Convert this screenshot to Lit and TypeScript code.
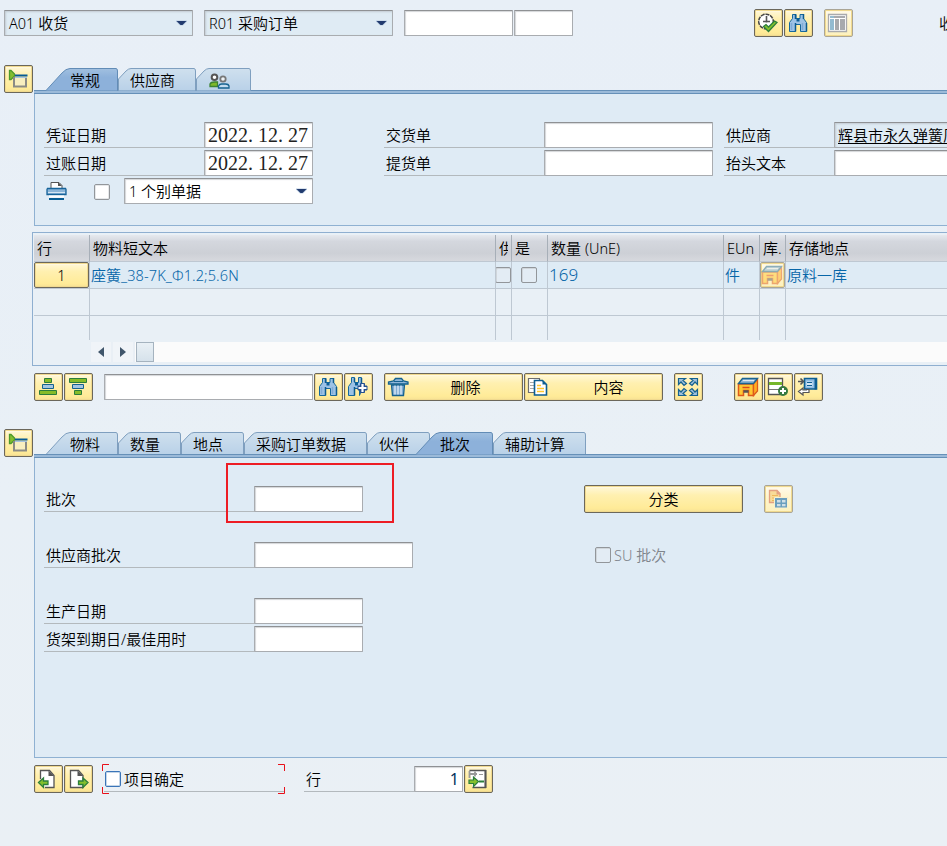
import { LitElement, html, svg, css, nothing, TemplateResult, SVGTemplateResult } from "lit";
import { customElement, property } from "lit/decorators.js";

const binoculars = svg`<path d="M8.500 5.500h3.500v4h4v-4h3.500v4l3 4v9h-6v-7h-5v7h-6v-9l3-4z" fill="#9cc2e5" stroke="#15689d"/><path d="M12.500 9.500h3v3h-3z" fill="#0b5f94"/><path d="M11.500 14v8.500M22.500 14v8.500M11.500 5v5M19.500 5v5" stroke="#0b5a8e" stroke-width="1.500"/><path d="M7.500 14v7M18.500 14v7" stroke="#7fabd6" stroke-width="1.500"/>`;
const box = svg`<path d="M4.500 11h15v11.500h-5v-5h-5v5h-5z" fill="#ffc832" stroke="#dd5a1c" stroke-width="1.500"/><path d="M19.500 10.500l4-4v11.500l-4 4.500z" fill="#ffae22" stroke="#dd5a1c" stroke-width="1.300"/><path d="M4.500 10.500l4-5h15l-4 5z" fill="#8fb6d6" stroke="#1b6390" stroke-width="1.300"/><path d="M9 7.500h11" stroke="#dce9f3"/><path d="M8.500 14.500h7" stroke="#dd4a1c" stroke-width="1.500"/><path d="M9.500 18.500h5" stroke="#555" stroke-width="2.500"/>`;
const arrowLeft = svg`<path d="M4.500 17.500l5-4.500v3h4.500v3.500h-4.500v3z" fill="#84c02c" stroke="#2c7f3c" stroke-width="1.300"/>`;
const arrowRight = svg`<path d="M24 17.500l-5-4.500v3h-4.500v3.500h4.500v3z" fill="#84c02c" stroke="#2c7f3c" stroke-width="1.300"/>`;

const ICONS: Record<string, SVGTemplateResult> = {
  toggle: svg`<path d="M5.500 5.500h1.500l3.500 3.500v2l-3.500 3.500h-1.500z" fill="#84bd2f" stroke="#4c9a2b" stroke-width="1.300"/><path d="M10 12v9.500h12v-9.500" fill="#f8eebf" stroke="#8b8b85" stroke-width="2"/><path d="M11 10.500h12.500" stroke="#075b94" stroke-width="2"/><path d="M11 12.500h12" stroke="#a7c4df"/>`,
  clock: svg`<circle cx="12" cy="12.500" r="7.300" fill="#fff" stroke="#444" stroke-width="1.500" stroke-dasharray="4 .8"/><path d="M12.500 7v6.500M9 12.500h7" stroke="#555" stroke-width="1.600"/><path d="M9.500 17.500l2.500-2 2.500 2.500 6-6 2.500 1.500-8.500 9z" fill="#84c02c" stroke="#2c7f3c" stroke-width="1.300"/>`,
  find: binoculars,
  findNext: svg`<path d="M7.500 4.500h3v5h4v-5h3v5l1 5-3 8v-7h-5v7h-6v-9l3-4z" fill="#9cc2e5" stroke="#15689d"/><path d="M11 9.500h3v3h-3z" fill="#0b5f94"/><path d="M10.500 14v8.500M10.500 5v4M17.500 5v5" stroke="#0b5a8e" stroke-width="1.500"/><path d="M16.500 10.500h4v2.500h2.500v4h-2.500v2.500h-4v-2.500h-2.500v-4h2.500z" fill="#24508f" stroke="#24508f"/><path d="M18.500 11v8M14.500 15h8" stroke="#fff" stroke-width="2.200"/>`,
  layout: svg`<path d="M4.500 5.500h18v17h-18z" fill="#fff" stroke="#a9aaad" stroke-width="1.300"/><path d="M6 7h15v2h-15zM11 10h4v11h-4zM16 10h5v11h-5z" fill="#a8aaad"/><path d="M6 7h4v14h-4z" fill="#93bbd0"/><path d="M6 9.500h15" stroke="#fff"/>`,
  sortUp: svg`<g stroke="#2c7d3c" fill="#86bc28"><path d="M10.500 5.500h7v4h-7zM5.500 17.500h17v4h-17z"/><path d="M8.500 11.500h11v4h-11z" fill="#a4c5e2" stroke="#15628f"/></g>`,
  sortDown: svg`<g stroke="#2c7d3c" fill="#86bc28"><path d="M5.500 5.500h17v4h-17zM10.500 17.500h7v4h-7z"/><path d="M8.500 11.500h11v4h-11z" fill="#a4c5e2" stroke="#15628f"/></g>`,
  trash: svg`<path d="M7.500 12h13l-1 10.500h-11z" fill="#7facd4" stroke="#15628f" stroke-width="1.300"/><path d="M11 12.500v9M14 12.500v9M17 12.500v9" stroke="#e8f2fa" stroke-width="1.200"/><path d="M4.500 11v-2l5-1 2-2.500h6l2 2.500 4.500 1v2z" fill="#8fb7da" stroke="#15628f" stroke-width="1.300"/><path d="M10 8.500h9" stroke="#15628f"/>`,
  copy: svg`<path d="M4.500 5.500h11v14h-11z" fill="#fff" stroke="#6e6e6e" stroke-width="1.200"/><path d="M6 9.500h4M6 12.500h4M6 15.500h4" stroke="#aaa"/><path d="M10.500 7.500h8l4 4v10.500h-12z" fill="#fff" stroke="#0d5e92" stroke-width="1.600"/><path d="M18.500 7.500v4h4z" fill="#0d5e92"/><path d="M13 12.500h4M13 15.500h7M13 18.500h7" stroke="#ffc62e" stroke-width="1.700"/>`,
  expand: svg`<g fill="#9fc0dc" stroke="#15628f" stroke-width="1.200"><path d="M4.500 5.500h7l-2.500 2 3.500 3-2.500 2-3-3.500-2.500 2.500z"/><path d="M23.500 5.500h-7l2.500 2-3.500 3 2.500 2 3-3.500 2.500 2.500z"/><path d="M4.500 22.500h7l-2.500-2 3.500-3-2.500-2-3 3.500-2.500-2.500z"/><path d="M23.500 22.500h-7l2.500-2-3.500-3 2.500-2 3 3.500 2.500-2.500z"/></g>`,
  box,
  addRow: svg`<path d="M4.500 5.500h14v16h-14z" fill="#fff" stroke="#555" stroke-width="1.300"/><path d="M5 9h13v3h-13z" fill="#76b72a"/><path d="M5 16.500h13" stroke="#777"/><circle cx="19" cy="18" r="5" fill="#35793f"/><path d="M19 15v6M16 18h6" stroke="#fff" stroke-width="2"/>`,
  transfer: svg`<path d="M10.500 5.500h12v10.500h-12z" fill="#8fbde3" stroke="#0d5e92" stroke-width="1.600"/><path d="M21.500 5v11.500" stroke="#0d5e92" stroke-width="2"/><path d="M12.500 8.500h6v5h-6z" fill="#d5e7f5"/><path d="M13 9.500h5M13 12.500h5" stroke="#0d5e92"/><path d="M4 8.500h5M6.500 5.500l3 3-3 3" stroke="#555" stroke-width="1.600"/><path d="M15 16.500v3h-6v2.500l-4.500-3.500 4.500-3.500v2h3.500v-.5z" fill="#fff" stroke="#555" stroke-width="1.200"/>`,
  docTable: svg`<path d="M5.500 5.500h7.500l3 3v9h-10.500z" fill="#f8dc98" stroke="#e3a183" stroke-width="1.300"/><path d="M12.500 5v4.500h4z" fill="#e3a183"/><path d="M8 10.500h6M8 13h3M8 15.500h3" stroke="#efb85a"/><path d="M10.500 12.500h13v10.500h-13z" fill="#6b9fbe" stroke="#f8f1cf"/><path d="M13 15h3.500v2.500h-3.500zM18 15h3.500v2.500h-3.500zM13 19h3.500v2.300h-3.500zM18 19h3.500v2.300h-3.500z" fill="#d0dfe6"/>`,
  prev: svg`<path d="M6.500 14v-8.500h9l4.500 5v12h-9" fill="#fff" stroke="#555" stroke-width="1.300"/><path d="M14.500 5.500v5.500h5.500z" fill="#555"/>${arrowLeft}`,
  next: svg`<path d="M6.500 22.500v-17h8l4.500 5v12z" fill="#fff" stroke="#555" stroke-width="1.300"/><path d="M13.500 5.500v5.500h5.500z" fill="#555"/>${arrowRight}`,
  goto: svg`<path d="M5.500 5.500h16v17h-13" fill="#fff" stroke="#555" stroke-width="1.300"/><path d="M21.500 5v18" stroke="#555" stroke-width="2"/><path d="M5 9h8M11 6.500v5M5.500 6v7" stroke="#999" stroke-width="1.800"/><path d="M15 9.500h4" stroke="#999"/><path d="M15 16.500h5" stroke="#2c7f3c" stroke-width="2"/><path d="M14.500 16.500l-5-4.500v3h-4.500v3.500h4.500v3z" fill="#84c02c" stroke="#2c7f3c" stroke-width="1.200"/>`,
};

@customElement("sap-button")
class SapButton extends LitElement {
  @property() icon = "";
  @property({ type: Number }) w = 29;
  @property({ type: Number }) h = 28;
  @property({ type: Boolean }) dim = false;

  static styles = css`
    :host { display: block; flex: none; }
    .b { position: relative; box-sizing: border-box; border: 1px solid #6b675b; border-radius: 2px; background: linear-gradient(#fff8dc, #fff0b0 35%, #ffeb98 85%, #f6e194);
      box-shadow: inset 0 0 0 1px #f0d98e, inset 0 2px #fff8df; display: flex; align-items: center; justify-content: center; color: #000; }
    .dim { border-color: #aaa596; background: linear-gradient(#fffbee, #fff5cf 40%, #fdf1bd); }
    svg { position: absolute; left: -1px; top: -1px; }
    .cell svg { left: -3px; top: -2px; opacity: 0.5; }
    .b.wide .txt { padding-left: 24px; }
    .b.copy .txt { padding-left: 30px; }
  `;

  render() {
    const wide = this.icon && this.w > 60;
    return html`<div class="b ${this.dim ? "dim" : ""} ${wide ? "wide" : ""} ${this.icon} ${this.h < 28 ? "cell" : ""}" style="width:${this.w}px;height:${this.h}px">
      ${this.icon ? html`<svg width="29" height="28" viewBox="0 0 29 28" fill="none">${ICONS[this.icon]}</svg>` : nothing}
      <span class="txt"><slot></slot></span>
    </div>`;
  }
}

interface Tab { text?: string; w: number; icon?: boolean; active?: boolean }

@customElement("app-root")
class AppRoot extends LitElement {
  static styles = css`
    :host { display: block; width: 947px; height: 846px; overflow: hidden; background: linear-gradient(#e8eff7, #e9f0f6 60%, #eaf0f5);
      font: 350 15px/20px "Noto Sans", "Noto Sans CJK SC", sans-serif; color: #000; white-space: nowrap; }
    * { box-sizing: border-box; }
    .lat { font-size: 14.500px; font-weight: 350; }
    .row { display: flex; align-items: center; }
    .top { height: 65px; padding: 9px 0 0 4px; align-items: flex-start; }
    .top .field { margin-top: 1px; }
    .field { height: 26px; flex: none; background: #fff; border: 1px solid #a9acb0; border-top-color: #8f9194; box-shadow: inset 1px 1px 1px #d4d6d9;
      display: flex; align-items: center; padding: 0 4px; border-radius: 1px; }
    .ro { background: #dfebf4; box-shadow: inset 1px 1px 2px #c2cbd2; }
    .combo { justify-content: space-between; padding-bottom: 1px; }
    .combo svg { margin: 1px 1px 0 0; }
    .ml1 { margin-left: 1px; }
    .ml11 { margin-left: 11px; }
    .serif { font: 20px/24px "Liberation Serif", serif; padding: 0 3px; color: #222; }
    .w49 { width: 49px; } .w59 { width: 59px; } .w109 { width: 109px; } .w159 { width: 159px; } .w169 { width: 169px; } .w189 { width: 189px; } .w209 { width: 209px; }
    .big { font-size: 16px; font-weight: 400; color: #04335c; justify-content: flex-end; padding-right: 3px; }
    .right { margin: 4px 0 0 86px; }
    .acts { margin-left: 181px; }

    .sect { display: flex; padding-left: 4px; }
    .sectbody { margin-left: 1px; flex: 1; }
    .tabs { display: flex; height: 25px; padding: 3px 0 0 12px; }
    .tab { position: relative; height: 22px; display: flex; align-items: center; padding-left: 12px; }
    .tab.first { padding-left: 24px; }
    .tab svg.bg { position: absolute; top: 0; left: -22px; overflow: visible; }
    .tab.active { z-index: 1; }
    .tab.active:not(.first) { padding-left: 10px; }
    .tab > span { position: relative; top: 1px; }
    .tab .people { position: relative; top: 2px; margin-left: 1px; }
    .panel { border-left: 1px solid #8fb1d2; border-bottom: 1px solid #8fb1d2; background: #dfebf5; }
    .bar { height: 4px; margin-left: -1px; background: #9bbad9; border-top: 1px solid #6690b8; border-bottom: 1px solid #6690b8; }
    .p1 { height: 136px; } .p2 { height: 304px; position: relative; }
    .form1 { display: grid; grid-template-columns: 329px 329px 1fr; column-gap: 11px; row-gap: 2px; padding: 28px 0 0 9px; }
    .lab { display: flex; align-items: center; height: 26px; padding-left: 2px; border-bottom: 1px solid #b3b9bd; flex: none; }
    .w160 { width: 160px; } .w110 { width: 110px; } .w210 { width: 210px; }
    .fill { width: 180px; }
    .und { text-decoration: underline; text-underline-offset: 2px; text-decoration-thickness: 1px; margin-left: -1px; }
    .cb { width: 16px; height: 16px; flex: none; border: 1px solid #92969a; border-radius: 2px; background: #fff; box-shadow: inset 0 0 0 1px #e6e8ea; }
    .cb.ro2 { background: #e3ecf4; box-shadow: inset 1px 1px #d0d6db; }
    .cb.blue { border-color: #3a74b8; box-shadow: inset 0 0 0 1px #c4d6e8; }
    .print { margin-left: 2px; }
    .c27 { margin: 1px 0 0 27px; } .c14 { margin-left: 14px; }

    .table { margin: 6px 0 0 32px; width: 960px; height: 134px; border: 1px solid #8fafd0; padding: 2px 0 0 1px; background: #e9f0f6; }
    .grid { display: grid; grid-template-columns: 55px 406px 16px 36px 176px 36px 26px 1fr; grid-template-rows: 27px 27px 27px 24px; }
    .cell { border-left: 1px solid #bec8d2; border-bottom: 1px solid #bec8d2; display: flex; align-items: center; overflow: hidden; }
    .cell.c0 { border-left: 0; }
    .cell.h { background: linear-gradient(#e6e9ee, #d4d7de 25%, #cdd0d6 70%, #d7d9de); border-left-color: #a7afb8; padding: 0 0 0 3px; }
    .cell.last { border-bottom: 0; }
    .cell.r1 { background: #deebf5; color: #0766a8; padding-left: 1px; }
    .cell.r1.nop { padding: 0; color: #000; }
    .code { letter-spacing: 0.110px; }
    .qty { font-size: 17px; }
    .c2 .cb { margin-left: -2px; }
    .c3 .cb { margin-left: 8px; }
    .narrow { display: block; width: 9px; overflow: hidden; }
    .scroll { display: flex; height: 20px; margin: 2px 0 0 57px; background: #fbfbfb; }
    .sb { width: 22px; background: #f0f4f8; display: flex; align-items: center; justify-content: center; border-right: 2px solid #e9eff5; height: 20px; }
    .thumb { width: 18px; height: 20px; margin-left: 1px; border: 1px solid #a5b3bf; background: linear-gradient(#e9f0f5, #d6e2eb); }

    .toolbar { margin: 7px 0 28px 34px; height: 28px; }
    .g1 { margin-left: 1px; } .g11 { margin-left: 11px; } .g21 { margin-left: 21px; } .g31 { margin-left: 31px; }
    .form2 { padding: 28px 0 0 9px; width: 540px; }
    .gap30 { margin-top: 30px; } .gap2 { margin-top: 2px; }
    .mark { position: absolute; left: 191px; top: 9px; width: 168px; height: 60px; border: 2px solid #ed1c24; }
    .side { padding: 27px 0 0 9px; }
    .cols { display: flex; }
    .su { margin: 33px 0 0 11px; height: 18px; color: #7f858c; gap: 3px; }
    .foot { margin: 7px 0 0 34px; height: 28px; }
    .focus { position: relative; width: 183px; height: 30px; margin-left: 9px; display: flex; align-items: center; padding: 0 0 0 3px; gap: 3px; }
    .focus svg { position: absolute; inset: 0; }
    .foot .lab { margin-left: 19px; }
  `;

  private arrow = html`<svg width="11" height="7" viewBox="0 0 11 7"><path d="M0 0.500h11v1l-4 4h-3l-4-4z" fill="#b9cbe0"/><path d="M0.500 1h10L6.500 5h-2z" fill="#213a6e"/></svg>`;

  private tab(t: Tab, i: number): TemplateResult {
    const { w } = t;
    const slant = i === 0 || t.active;
    // The slanted edge of an active tab reaches back over its left neighbour.
    const start = i === 0 ? 22 : 8;
    const d = slant
      ? `M${start} 22.500L${start + 16} 5Q${start + 20} .500 ${start + 24} .500H${w + 20}Q${w + 21.500} .500 ${w + 21.500} 3V22.500`
      : `M22.500 22.500V11L30 3Q32.500 .500 35 .500H${w + 20}Q${w + 21.500} .500 ${w + 21.500} 3V22.500`;
    const id = t.active ? "ga" : "gi";
    return html`<div class="tab ${i === 0 ? "first" : ""} ${t.active ? "active" : ""}" style="width:${w}px">
      <svg class="bg" width=${w + 24} height="23"><defs>
        <linearGradient id="ga" x2="0" y2="1"><stop stop-color="#a1c0e0"/><stop offset=".4" stop-color="#8db1da"/><stop offset="1" stop-color="#8db1da"/></linearGradient>
        <linearGradient id="gi" x2="0" y2="1"><stop stop-color="#cfe0ee"/><stop offset="1" stop-color="#b9d1e8"/></linearGradient></defs>
        <path d=${d} fill="url(#${id})" stroke=${t.active ? "#628cb6" : "#7f9fbf"}/></svg>
      ${t.icon
        ? html`<svg class="people" width="21" height="16" viewBox="0 0 21 16"><circle cx="5.500" cy="4.200" r="2.800" fill="#fff" stroke="#555" stroke-width="2"/><path d="M1 13.500v-2.500q1-2 4.500-2h3v4.500z" fill="#7fb82b" stroke="#3d8333" stroke-width="1.300"/><circle cx="14" cy="6" r="2.700" fill="#eef2f5" stroke="#777" stroke-width="1.800"/><path d="M9.500 15v-2q1-2 3-2h4q3 0 3.500 2v2z" fill="#c2dbef" stroke="#15628f" stroke-width="1.300"/></svg>`
        : html`<span>${t.text}</span>`}
    </div>`;
  }

  private tabs(list: Tab[]) {
    return html`<div class="tabs">${list.map((t, i) => this.tab(t, i))}</div>`;
  }

  private line(text: string, cls: string, gap: string) {
    return html`<div class="row ${gap}"><div class="lab w210">${text}</div><div class="field ${cls}"></div></div>`;
  }

  render() {
    const heads = ["行", "物料短文本", html`<span class="narrow">供</span>`, "是", html`数量&nbsp;<span class="lat">(UnE)</span>`, html`<span class="lat">EUn</span>`, "库.", "存储地点"];
    const first = [
      html`<sap-button .w=${55} .h=${26}><span class="lat">1</span></sap-button>`,
      html`座簧<span class="lat code">_38-7K_Φ1.2;5.6N</span>`,
      html`<span class="cb ro2"></span>`,
      html`<span class="cb ro2"></span>`,
      html`<span class="qty">169</span>`,
      "件",
      html`<sap-button icon="box" .w=${25} .h=${26} dim></sap-button>`,
      "原料一库",
    ];
    return html`
      <div class="row top">
        <div class="field ro combo w189"><span><span class="lat">A01 </span>收货</span>${this.arrow}</div>
        <div class="field ro combo w189 ml11"><span><span class="lat">R01 </span>采购订单</span>${this.arrow}</div>
        <div class="field w109 ml11"></div><div class="field w59 ml1"></div>
        <sap-button class="acts" icon="clock"></sap-button><sap-button class="g1" icon="find"></sap-button>
        <sap-button class="g11" icon="layout" dim></sap-button>
        <span class="right">收货</span>
      </div>

      <div class="sect">
        <sap-button icon="toggle"></sap-button>
        <div class="sectbody">
          ${this.tabs([{ text: "常规", w: 72, active: true }, { text: "供应商", w: 78 }, { w: 55, icon: true }])}
          <div class="panel p1"><div class="bar"></div>
            <div class="form1">
              <div class="row"><div class="lab w160">凭证日期</div><div class="field w109 serif">2022. 12. 27</div></div>
              <div class="row"><div class="lab w160">交货单</div><div class="field w169"></div></div>
              <div class="row"><div class="lab w110">供应商</div><div class="field ro fill"><span class="und">辉县市永久弹簧厂</span></div></div>
              <div class="row"><div class="lab w160">过账日期</div><div class="field w109 serif">2022. 12. 27</div></div>
              <div class="row"><div class="lab w160">提货单</div><div class="field w169"></div></div>
              <div class="row"><div class="lab w110">抬头文本</div><div class="field fill"></div></div>
              <div class="row">
                <svg class="print" width="21" height="20" viewBox="0 0 21 20"><path d="M5 7.500v-6h8l3 3v3" fill="#fff" stroke="#555"/><path d="M12 1v4h4z" fill="#555"/><path d="M1.500 7.500h18l.5 1v5H1v-5z" fill="#8bb5d8" stroke="#17649a" stroke-width="1.300"/><path d="M2 11.500h17" stroke="#d5e6f3"/><path d="M3 18h15" stroke="#075d94" stroke-width="2"/><path d="M3 15.500h15" stroke="#fff" stroke-width="2"/></svg>
                <span class="cb c27"></span>
                <div class="field combo w189 c14"><span><span class="lat">1 </span>个别单据</span>${this.arrow}</div>
              </div>
            </div>
          </div>
        </div>
      </div>

      <div class="table">
        <div class="grid">
          ${heads.map((h, i) => html`<div class="cell h c${i}">${h}</div>`)}
          ${first.map((c, i) => html`<div class="cell r1 c${i} ${[0, 6].includes(i) ? "nop" : ""}">${c}</div>`)}
          ${heads.map((_, i) => html`<div class="cell c${i}"></div>`)}
          ${heads.map((_, i) => html`<div class="cell last c${i}"></div>`)}
        </div>
        <div class="scroll">
          <span class="sb"><svg width="6" height="10"><path d="M6 0v10L0 5z" fill="#40566b"/></svg></span>
          <span class="sb"><svg width="6" height="10"><path d="M0 0v10l6-5z" fill="#40566b"/></svg></span>
          <span class="thumb"></span>
        </div>
      </div>

      <div class="row toolbar">
        <sap-button icon="sortUp"></sap-button><sap-button class="g1" icon="sortDown"></sap-button>
        <div class="field w209 g11"></div>
        <sap-button class="g1" icon="find"></sap-button><sap-button class="g1" icon="findNext"></sap-button>
        <sap-button class="g11" icon="trash" .w=${139}>删除</sap-button><sap-button class="g1" icon="copy" .w=${139}>内容</sap-button>
        <sap-button class="g11" icon="expand"></sap-button>
        <sap-button class="g31" icon="box"></sap-button><sap-button class="g1" icon="addRow"></sap-button><sap-button class="g1" icon="transfer"></sap-button>
      </div>

      <div class="sect">
        <sap-button icon="toggle"></sap-button>
        <div class="sectbody">
          ${this.tabs([{ text: "物料", w: 72 }, { text: "数量", w: 63 }, { text: "地点", w: 63 }, { text: "采购订单数据", w: 123 }, { text: "伙伴", w: 63 }, { text: "批次", w: 63, active: true }, { text: "辅助计算", w: 93 }])}
          <div class="panel p2"><div class="bar"></div>
            <div class="cols">
              <div class="form2">
                ${this.line("批次", "w109", "")}
                ${this.line("供应商批次", "w159", "gap30")}
                ${this.line("生产日期", "w109", "gap30")}
                ${this.line("货架到期日/最佳用时", "w109", "gap2")}
              </div>
              <div class="side">
                <div class="row"><sap-button .w=${159}>分类</sap-button><sap-button class="g21" icon="docTable" dim></sap-button></div>
                <div class="row su"><span class="cb ro2"></span><span><span class="lat">SU </span>批次</span></div>
              </div>
            </div>
            <div class="mark"></div>
          </div>
        </div>
      </div>

      <div class="row foot">
        <sap-button icon="prev"></sap-button><sap-button class="g1" icon="next"></sap-button>
        <div class="focus">
          <svg width="183" height="30" fill="none"><path d="M2 27.500h180" stroke="#b3b9bd"/><path d="M7 .500H.500V7M176 .500h6.500V7M7 29.500H.500V23M176 29.500h6.500V23" stroke="#e8101a"/></svg>
          <span class="cb blue"></span><span>项目确定</span>
        </div>
        <div class="lab w110">行</div><div class="field w49 big">1</div>
        <sap-button class="g1" icon="goto"></sap-button>
      </div>
    `;
  }
}
